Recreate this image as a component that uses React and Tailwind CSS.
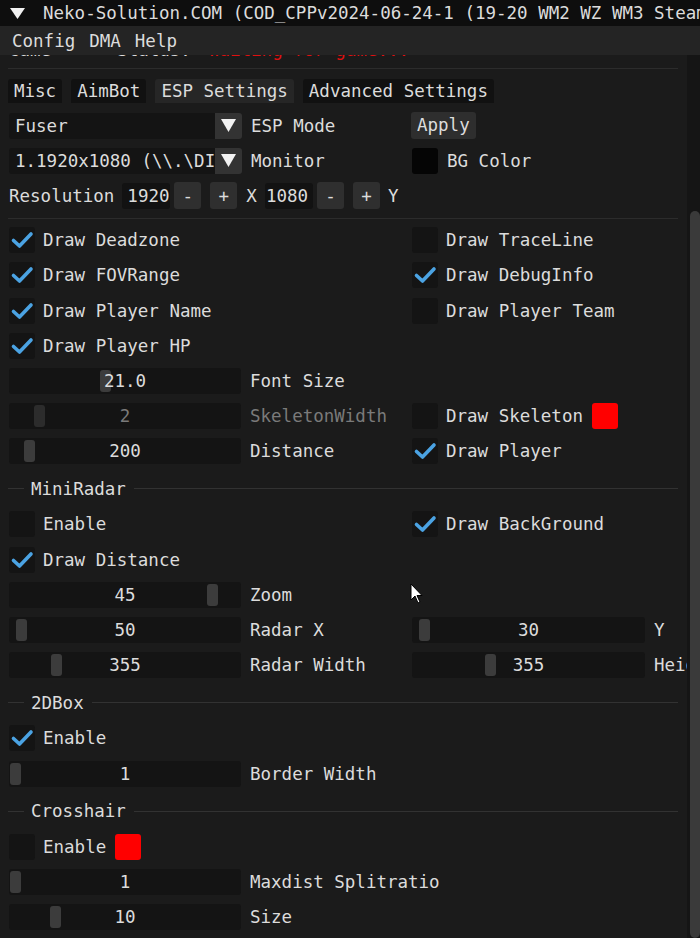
import React from "react";

const Check = ({ on }) => (
  <div className="w-[26px] h-[26px] shrink-0 rounded-[3px] bg-[#141414] flex items-center justify-center">
    {on && (
      <svg width="26" height="26" viewBox="0 0 26 26">
        <polyline points="4.5,13.5 10.5,19 22,7" fill="none" stroke="#4ba3e3" strokeWidth="3.6" strokeLinecap="round" strokeLinejoin="round" />
      </svg>
    )}
  </div>
);

const Slider = ({ value, pos, w = "w-[232px]", disabled }) => (
  <div className={`relative ${w} h-[26px] shrink-0 rounded-[3px] bg-[#141414] flex items-center justify-center`}>
    <div
      className={`absolute top-[2px] bottom-[2px] w-[11px] rounded-[3px] ${disabled ? "bg-[#2c2c2c]" : "bg-[#3c3c3c]"}`}
      style={{ left: pos }}
    />
    <span className={`relative ${disabled ? "text-[#7a7a7a]" : ""}`}>{value}</span>
  </div>
);

const CheckItem = ({ on, label }) => (
  <div className="flex items-center gap-[8px]">
    <Check on={on} />
    <span className="whitespace-nowrap">{label}</span>
  </div>
);

const Row = ({ left, right }) => (
  <div className="h-[35.2px] flex items-center">
    <div className="w-[403px] shrink-0 flex items-center">{left}</div>
    {right && <div className="flex items-center whitespace-nowrap">{right}</div>}
  </div>
);

const SliderItem = ({ value, pos, label, disabled, w }) => (
  <div className="flex items-center gap-[9px] whitespace-nowrap">
    <Slider value={value} pos={pos} disabled={disabled} w={w} />
    <span className={disabled ? "text-[#7a7a7a]" : ""}>{label}</span>
  </div>
);

// section title with a rule on both sides
const Header = ({ title }) => (
  <div className="h-[38px] pt-[2px] flex items-center ml-[-1px] mr-[9px]">
    <div className="w-[16px] h-px bg-[#323232]" />
    <span className="ml-[7px]">{title}</span>
    <div className="flex-1 h-px bg-[#323232] ml-[8px]" />
  </div>
);

const Swatch = ({ color }) => (
  <div className={`w-[26px] h-[26px] shrink-0 rounded-[3px] ${color}`} />
);

const Combo = ({ text }) => (
  <div className="flex h-[26px] w-[233px] shrink-0">
    <div className="w-[206px] bg-[#141414] rounded-l-[3px] pl-[6px] overflow-hidden whitespace-nowrap">{text}</div>
    <div className="w-[27px] bg-[#333333] rounded-r-[3px] flex items-center justify-center">
      <svg width="15" height="13" viewBox="0 0 15 13">
        <polygon points="0,0 15,0 7.5,13" fill="#f2f2f2" />
      </svg>
    </div>
  </div>
);

const SmallBtn = ({ children, cls }) => (
  <div className={`w-[27px] h-[27px] rounded-[3px] bg-[#2f2f2f] flex items-center justify-center ${cls}`}>{children}</div>
);

export default function App() {
  return (
    <div className="relative w-[700px] h-[938px] overflow-hidden bg-[#1b1b1b] text-[#dcdcdc] text-[17.5px] leading-[26px] font-['DejaVu_Sans_Mono',monospace]">
      {/* title bar */}
      <div className="h-[26px] bg-[#0e0e0e] flex items-center pl-[10px] gap-[18px] whitespace-nowrap overflow-hidden">
        <svg width="15" height="11" viewBox="0 0 15 11" className="shrink-0">
          <polygon points="0,0 15,0 7.5,11" fill="#f0f0f0" />
        </svg>
        <span>Neko-Solution.COM (COD_CPPv2024-06-24-1 (19-20 WM2 WZ WM3 Steam))</span>
      </div>

      {/* menu bar */}
      <div className="h-[29px] bg-[#242424] flex items-center pl-[12px] gap-[14px]">
        <span>Config</span>
        <span>DMA</span>
        <span>Help</span>
      </div>

      <div className="flex h-[883px]">
        <div className="w-[687px] shrink-0 overflow-hidden">
          {/* status line, scrolled mostly out of view */}
          <div className="h-[13px] overflow-hidden">
            <div className="mt-[-18px] flex whitespace-nowrap">
              <span className="ml-[9px]">Game</span>
              <span className="ml-[66px]">Status:</span>
              <span className="ml-[18px] text-[#e01010]">Waiting for game...</span>
            </div>
          </div>
          <div className="ml-[8px] w-[670px] h-px bg-[#2c2c2c]" />

          {/* tabs */}
          <div className="mt-[10px] h-[24px] flex pl-[8px] gap-[9px] whitespace-nowrap">
            <div className="px-[6px] bg-[#111111] rounded-t-[3px] leading-[24px]">Misc</div>
            <div className="px-[6px] bg-[#111111] rounded-t-[3px] leading-[24px]">AimBot</div>
            <div className="px-[6px] bg-[#262626] rounded-t-[3px] leading-[24px]">ESP Settings</div>
            <div className="px-[6px] bg-[#111111] rounded-t-[3px] leading-[24px]">Advanced Settings</div>
          </div>

          <div className="mt-[5px] pl-[9px]">
            <Row
              left={
                <div className="flex items-center gap-[9px] whitespace-nowrap">
                  <Combo text="Fuser" />
                  <span>ESP Mode</span>
                </div>
              }
              right={<div className="ml-[-1px] h-[27px] px-[6px] bg-[#2e2e2e] rounded-[3px] leading-[27px]">Apply</div>}
            />
            <Row
              left={
                <div className="flex items-center gap-[9px] whitespace-nowrap">
                  <Combo text={"1.1920x1080 (\\\\.\\DISPLAY1)"} />
                  <span>Monitor</span>
                </div>
              }
              right={
                <div className="flex items-center gap-[9px]">
                  <Swatch color="bg-[#050505]" />
                  <span>BG Color</span>
                </div>
              }
            />
            <div className="h-[35.2px] flex items-center whitespace-nowrap">
              <span>Resolution</span>
              <div className="ml-[8px] w-[48px] h-[26px] bg-[#121212] rounded-[3px] pl-[5px]">1920</div>
              <SmallBtn cls="ml-[4px]">-</SmallBtn>
              <SmallBtn cls="ml-[9px]">+</SmallBtn>
              <span className="ml-[9px]">X</span>
              <div className="ml-[8px] w-[48px] h-[26px] bg-[#121212] rounded-[3px] pl-[1px]">1080</div>
              <SmallBtn cls="ml-[4px]">-</SmallBtn>
              <SmallBtn cls="ml-[9px]">+</SmallBtn>
              <span className="ml-[8px]">Y</span>
            </div>
            <div className="h-[9px] flex items-center ml-[-1px] mr-[9px]">
              <div className="flex-1 h-px bg-[#2c2c2c]" />
            </div>

            <Row left={<CheckItem on label="Draw Deadzone" />} right={<CheckItem label="Draw TraceLine" />} />
            <Row left={<CheckItem on label="Draw FOVRange" />} right={<CheckItem on label="Draw DebugInfo" />} />
            <Row left={<CheckItem on label="Draw Player Name" />} right={<CheckItem label="Draw Player Team" />} />
            <Row left={<CheckItem on label="Draw Player HP" />} />
            <Row left={<SliderItem value="21.0" pos={91} label="Font Size" />} />
            <Row
              left={<SliderItem value="2" pos={25} label="SkeletonWidth" disabled />}
              right={
                <div className="flex items-center gap-[9px]">
                  <CheckItem label="Draw Skeleton" />
                  <Swatch color="bg-[#ff0000]" />
                </div>
              }
            />
            <Row left={<SliderItem value="200" pos={15} label="Distance" />} right={<CheckItem on label="Draw Player" />} />

            <Header title="MiniRadar" />
            <Row left={<CheckItem label="Enable" />} right={<CheckItem on label="Draw BackGround" />} />
            <Row left={<CheckItem on label="Draw Distance" />} />
            <Row left={<SliderItem value="45" pos={198} label="Zoom" />} />
            <Row
              left={<SliderItem value="50" pos={7} label="Radar X" />}
              right={<SliderItem value="30" pos={7} label="Y" w="w-[233px]" />}
            />
            <Row
              left={<SliderItem value="355" pos={42} label="Radar Width" />}
              right={<SliderItem value="355" pos={73} label="Height" w="w-[233px]" />}
            />

            <Header title="2DBox" />
            <Row left={<CheckItem on label="Enable" />} />
            <Row left={<SliderItem value="1" pos={1} label="Border Width" />} />

            <Header title="Crosshair" />
            <Row
              left={
                <div className="flex items-center gap-[9px]">
                  <CheckItem label="Enable" />
                  <Swatch color="bg-[#ff0000]" />
                </div>
              }
            />
            <Row left={<SliderItem value="1" pos={1} label="Maxdist Splitratio" />} />
            <Row left={<SliderItem value="10" pos={41} label="Size" />} />
          </div>
        </div>

        {/* scrollbar */}
        <div className="flex-1 bg-[#151515] flex flex-col pt-[156px] pl-[3px]">
          <div className="flex-1 bg-[#3a3a3a] rounded-[5px]" />
        </div>
      </div>

      {/* mouse cursor */}
      <svg className="absolute left-[410px] top-[583px]" width="13" height="21" viewBox="0 0 13 21">
        <path d="M1 1 L1 17 L5 13 L8 20 L10 19 L7 12.5 L12 12.5 Z" fill="#ffffff" stroke="#000000" strokeWidth="1" strokeLinejoin="round" />
      </svg>
    </div>
  );
}
